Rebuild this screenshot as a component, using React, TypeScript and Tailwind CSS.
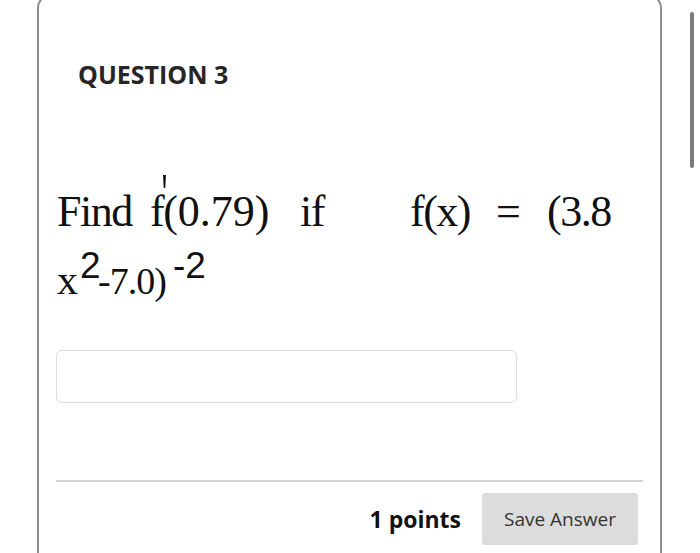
export default function App() {
  return (
    <div className="relative h-[553px] w-[700px] overflow-hidden bg-white font-['Open_Sans',sans-serif]">
      <div className="ml-[37px] -mt-[6px] h-[620px] w-[625px] rounded-[14px] border-2 border-[#8e8e8e] px-[17px] pt-[61px]">
        <h2 className="ml-[22px] text-[25px] font-bold leading-[34px] text-[#262626]">QUESTION 3</h2>

        <div className="mt-[96px] flex h-[50px] items-baseline whitespace-nowrap font-['Liberation_Serif',serif] text-[44px] leading-[50px] tracking-[-1.5px] text-[#111]">
          <span className="ml-[1px] inline-block w-[93px]">Find</span>
          <span className="inline-block w-[150px]">
            <span className="relative">
              f
              <span className="absolute left-[13px] top-[-12px] h-[13px] w-[3px] bg-[#111] [clip-path:polygon(0_0,100%_0,75%_100%,25%_100%)]" />
            </span>
            <span className="tracking-[0px]">(0.79)</span>
          </span>
          <span className="inline-block w-[110px]">if</span>
          <span className="inline-block w-[86px]">f(x)</span>
          <span className="inline-block w-[51px]">=</span>
          <span className="inline-block">(3.8</span>
        </div>

        <div className="mt-[18px] flex h-[50px] items-baseline whitespace-nowrap font-['Liberation_Serif',serif] text-[42px] leading-[50px] tracking-[-1px] text-[#111]">
          <span className="ml-[1px] inline-block w-[23px]">x</span>
          <span className="relative -top-[16px] inline-block w-[18px] font-['Liberation_Sans',sans-serif] text-[37px] tracking-normal">2</span>
          <span className="inline-block w-[75px] text-[38px]">-7.0)</span>
          <span className="relative -top-[16px] inline-block font-['Liberation_Sans',sans-serif] text-[37px] tracking-normal">
            -2
          </span>
        </div>

        <input
          type="text"
          className="mt-[45px] block h-[53px] w-[461px] rounded-md border-[1.5px] border-[#dcdcdc] bg-white px-3 outline-none"
        />

        <div className="mt-[77px] h-[2px] w-full bg-[#d2d2d2]" />

        <div className="mt-[11px] mr-[5px] flex items-center justify-end gap-[21px]">
          <span className="text-[23px] font-bold text-[#111]">1 points</span>
          <button className="h-[52px] w-[156px] rounded-[3px] bg-[#dcdcdc] text-[19px] text-[#333]">
            Save Answer
          </button>
        </div>
      </div>

      <div className="absolute left-[690px] top-[12px] h-[156px] w-[4px] rounded-full bg-[#7b7b7b]" />
    </div>
  );
}
